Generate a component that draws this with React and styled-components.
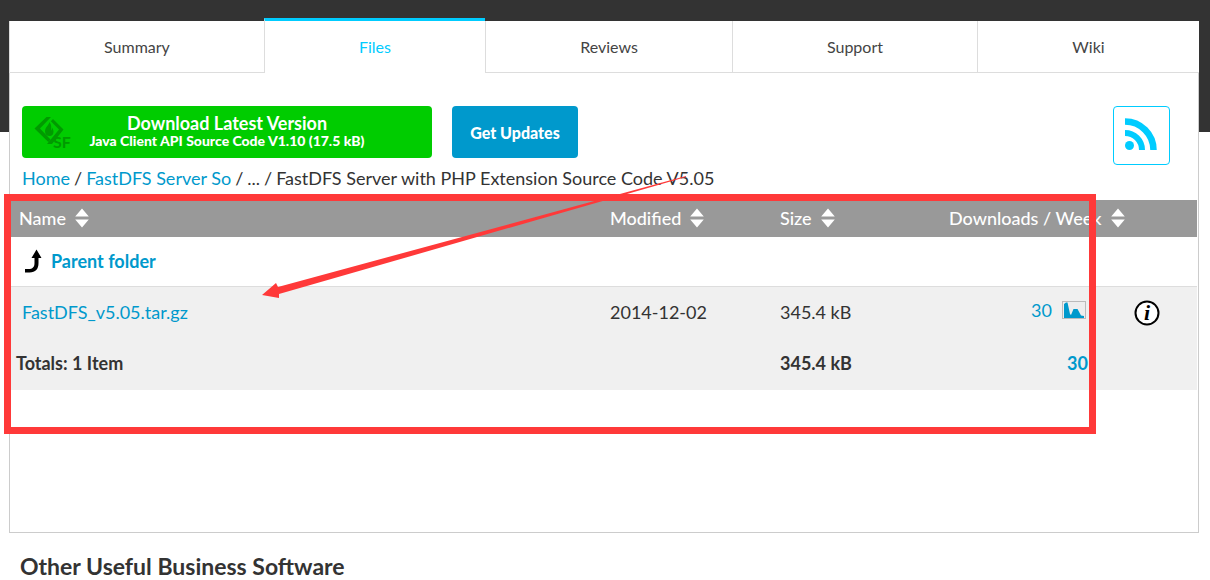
import { useState } from "react"
import styled, { createGlobalStyle } from "styled-components"

const GlobalStyle = createGlobalStyle`
  * {
    box-sizing: border-box;
  }

  body {
    margin: 0;
    background: #fff;
    color: #333;
    font-family: Lato, "Open Sans", sans-serif;
    font-size: 18px;
    line-height: 24px;
  }

  a {
    color: #09c;
    text-decoration: none;
  }
`

const Page = styled.div`
  min-height: 100vh;
  padding: 18px 11px 0 9px;
  background: linear-gradient(#333, #333) top / 100% 132px no-repeat;
`

const Tabs = styled.nav`
  display: flex;
  align-items: flex-end;
`

const Tab = styled.a`
  flex: ${({ $grow }) => $grow} 1 0;
  height: ${({ $active }) => ($active ? 55 : 52)}px;
  padding-top: 14px;
  border-top: ${({ $active }) => ($active ? "3px solid #0cf" : "0")};
  border-left: 1px solid #ddd;
  border-bottom: ${({ $active }) => ($active ? "0" : "1px solid #ddd")};
  background: #fff;
  color: ${({ $active }) => ($active ? "#0cf" : "#444")};
  font-size: 16px;
  text-align: center;
`

const Panel = styled.main`
  padding: 33px 1px 142px;
  border: 1px solid #ccc;
  border-top: 0;
  background: #fff;
`

const Actions = styled.div`
  display: flex;
  gap: 20px;
  align-items: flex-start;
  height: 60px;
  padding: 0 27px 0 11px;
`

const ActionButton = styled.button`
  display: flex;
  align-items: center;
  justify-content: center;
  width: 126px;
  height: 52px;
  padding: 0;
  border: 0;
  border-radius: 4px;
  background: #09c;
  color: #fff;
  font-family: inherit;
  font-size: 16px;
  font-weight: 900;
  cursor: pointer;
`

const DownloadButton = styled(ActionButton)`
  justify-content: flex-start;
  width: 410px;
  padding: 0 12px;
  background: #0c0;
`

const DownloadText = styled.span`
  flex: 1;
  padding-right: 40px;
  font-size: 18px;
  line-height: 18px;
  font-weight: 700;

  small {
    display: block;
    font-size: 14px;
    font-weight: 900;
  }
`

const FeedLink = styled.a`
  display: flex;
  align-items: center;
  justify-content: center;
  width: 57px;
  height: 59px;
  margin-left: auto;
  padding-bottom: 3px;
  border: 1px solid #0cf;
  border-radius: 4px;
`

const Breadcrumbs = styled.nav`
  display: flex;
  gap: 4px;
  padding: 0 11px;
  margin-bottom: 10px;
`

const FilesArea = styled.div`
  position: relative;
`

const FilesTable = styled.table`
  width: 100%;
  border-collapse: collapse;
  table-layout: fixed;
`

const HeadCell = styled.th`
  width: ${({ $width }) => $width};
  height: 37px;
  padding: ${({ $pad }) => $pad || "0 0 2px"};
  background: #999;
  text-align: left;
  font-weight: 500;
`

const SortButton = styled.button`
  display: flex;
  align-items: center;
  gap: 9px;
  padding: 0;
  border: 0;
  background: none;
  color: #fff;
  font: inherit;
  white-space: nowrap;
  cursor: pointer;
`

const Row = styled.tr`
  height: ${({ $height }) => $height}px;
  background: ${({ $shaded }) => ($shaded ? "#f0f0f0" : "#fff")};
  border-bottom: ${({ $line }) => ($line ? "1px solid #ddd" : "0")};
  font-weight: ${({ $bold }) => ($bold ? 700 : 400)};
`

const Cell = styled.td`
  padding: ${({ $pad }) => $pad || "0"};
  text-align: ${({ $right }) => ($right ? "right" : "left")};
`

const IconLink = styled.a`
  display: flex;
  align-items: center;
  justify-content: ${({ $end }) => ($end ? "flex-end" : "flex-start")};
  gap: ${({ $end }) => ($end ? 10 : 9)}px;
`

const InfoButton = styled.button`
  display: block;
  padding: 2px 0 0;
  border: 0;
  background: none;
  cursor: pointer;

  svg {
    display: block;
  }
`

// Highlight drawn over the table
const Marker = styled.div`
  position: absolute;
  top: -6px;
  left: -7px;
  right: 101px;
  height: 240px;
  border: 7px solid #ff3939;
  pointer-events: none;
`

const MarkerArrow = styled.svg`
  position: absolute;
  top: -30px;
  left: 250px;
  pointer-events: none;
`

const Heading = styled.h2`
  margin: 18px 11px 0;
  font-size: 23px;
  line-height: 30px;
  font-weight: 700;
`

const tabs = [
  { label: "Summary", grow: 255 },
  { label: "Files", grow: 221 },
  { label: "Reviews", grow: 247 },
  { label: "Support", grow: 245 },
  { label: "Wiki", grow: 222 },
]

const columns = [
  { key: "name", label: "Name", pad: "0 0 2px 8px" },
  { key: "modified", label: "Modified", width: "170px" },
  { key: "size", label: "Size", width: "169px" },
  { key: "downloads", label: "Downloads / Week", width: "185px" },
]

const files = [
  { name: "FastDFS_v5.05.tar.gz", modified: "2014-12-02", size: "345.4 kB", downloads: 30 },
]

const SortIcon = () => (
  <svg width="14" height="20" viewBox="0 0 14 20" fill="#fff" aria-hidden="true">
    <path d="M7 .5L13.800 8.500H.2zM.2 11.500h13.600L7 19.500z" />
  </svg>
)

const SourceIcon = () => (
  <svg width="40" height="36" viewBox="0 0 40 36" aria-hidden="true">
    <path
      fill="#009a00"
      d="M12.500 3h4.500L6 14.500l10.500 11-2.200 2.500L.5 14.500zM19 5l10.500 10.500L18 30h-5l12-14.500-8.200-8.300z"
    />
    <path fill="#009a00" d="M15.500 8c-.5 3-4.500 5-4.500 9.500 0 3 2 4.500 4.500 4.500s4-1.500 4-4.500c0-2-1-3-1.500-4 0 2-.5 3-1 3 .5-3 .5-6-1.500-8.500z" />
    <text x="19" y="34" fill="#009a00" fontFamily="Lato, sans-serif" fontSize="16" fontWeight="700">SF</text>
  </svg>
)

const FeedIcon = () => (
  <svg width="34" height="32" viewBox="0 0 34 32" fill="none" stroke="#0cf" aria-hidden="true">
    <circle cx="4.500" cy="27.500" r="4.500" fill="#0cf" stroke="none" />
    <path strokeWidth="6" d="M0 15a17 17 0 0 1 17 17" />
    <path strokeWidth="6.500" d="M0 3.500a28.500 28.500 0 0 1 28.500 28.500" />
  </svg>
)

const ParentIcon = () => (
  <svg width="17" height="24" viewBox="0 0 17 24" aria-hidden="true">
    <path d="M11.500 .5l5 8.500h-3v5c0 6-3 9.500-9 9.500H0V20h3.500c4 0 6-2 6-6V9h-3z" />
  </svg>
)

const ChartIcon = () => (
  <svg width="24" height="18" viewBox="0 0 24 18" aria-hidden="true">
    <rect x=".5" y=".5" width="23" height="17" fill="#eee" stroke="#bbb" />
    <path fill="#09c" d="M2 17V3l2-1.500h1.500L8 13l1 1L11.500 8h4l3.500 6.500 3 .5v2z" />
  </svg>
)

const InfoIcon = () => (
  <svg width="26" height="26" viewBox="0 0 26 26" aria-hidden="true">
    <circle cx="13" cy="13" r="11.500" fill="#fff" stroke="#000" strokeWidth="2" />
    <text
      x="13"
      y="20"
      textAnchor="middle"
      fontFamily="Liberation Serif, serif"
      fontSize="22"
      fontStyle="italic"
      fontWeight="700"
    >
      i
    </text>
  </svg>
)

const App = () => {
  const [activeTab, setActiveTab] = useState("Files")

  return (
    <>
      <GlobalStyle />
      <Page>
        <Tabs>
          {tabs.map(tab => (
            <Tab
              key={tab.label}
              href={`#${tab.label.toLowerCase()}`}
              $grow={tab.grow}
              $active={tab.label === activeTab}
              onClick={() => setActiveTab(tab.label)}
            >
              {tab.label}
            </Tab>
          ))}
        </Tabs>
        <Panel>
          <Actions>
            <DownloadButton>
              <SourceIcon />
              <DownloadText>
                Download Latest Version
                <small>Java Client API Source Code V1.10 (17.5 kB)</small>
              </DownloadText>
            </DownloadButton>
            <ActionButton>Get Updates</ActionButton>
            <FeedLink href="#rss" aria-label="RSS feed">
              <FeedIcon />
            </FeedLink>
          </Actions>
          <Breadcrumbs>
            <a href="#home">Home</a>
            <span>/</span>
            <a href="#server">FastDFS Server So</a>
            <span>/</span>
            <span>...</span>
            <span>/</span>
            <span>FastDFS Server with PHP Extension Source Code V5.05</span>
          </Breadcrumbs>
          <FilesArea>
            <FilesTable>
              <thead>
                <tr>
                  {columns.map(col => (
                    <HeadCell key={col.key} $width={col.width} $pad={col.pad}>
                      <SortButton>
                        {col.label}
                        <SortIcon />
                      </SortButton>
                    </HeadCell>
                  ))}
                  <HeadCell $width="63px" aria-label="Info" />
                </tr>
              </thead>
              <tbody>
                <Row $height={49} $line $bold>
                  <Cell colSpan={5} $pad="0 0 0 14px">
                    <IconLink href="#parent">
                      <ParentIcon />
                      Parent folder
                    </IconLink>
                  </Cell>
                </Row>
                {files.map(file => (
                  <Row key={file.name} $height={51} $shaded>
                    <Cell $pad="0 0 0 11px">
                      <a href="#file">{file.name}</a>
                    </Cell>
                    <Cell>{file.modified}</Cell>
                    <Cell>{file.size}</Cell>
                    <Cell $right $pad="0 48px 4px 0">
                      <IconLink href="#stats" $end>
                        {file.downloads}
                        <ChartIcon />
                      </IconLink>
                    </Cell>
                    <Cell>
                      <InfoButton aria-label="File details">
                        <InfoIcon />
                      </InfoButton>
                    </Cell>
                  </Row>
                ))}
                <Row $height={53} $shaded $bold>
                  <Cell colSpan={2} $pad="0 0 2px 5px">Totals: 1 Item</Cell>
                  <Cell $pad="0 0 2px">345.4 kB</Cell>
                  <Cell $right $pad="0 46px 2px 0">
                    <a href="#stats">30</a>
                  </Cell>
                  <Cell />
                </Row>
              </tbody>
            </FilesTable>
            <Marker />
            <MarkerArrow width="432" height="132" viewBox="0 0 432 132" fill="#ff3939" aria-hidden="true">
              <path d="M1 125L15 113l2 4L425 6v1L18 124v4z" />
            </MarkerArrow>
          </FilesArea>
        </Panel>
        <Heading>Other Useful Business Software</Heading>
      </Page>
    </>
  )
}

export default App
